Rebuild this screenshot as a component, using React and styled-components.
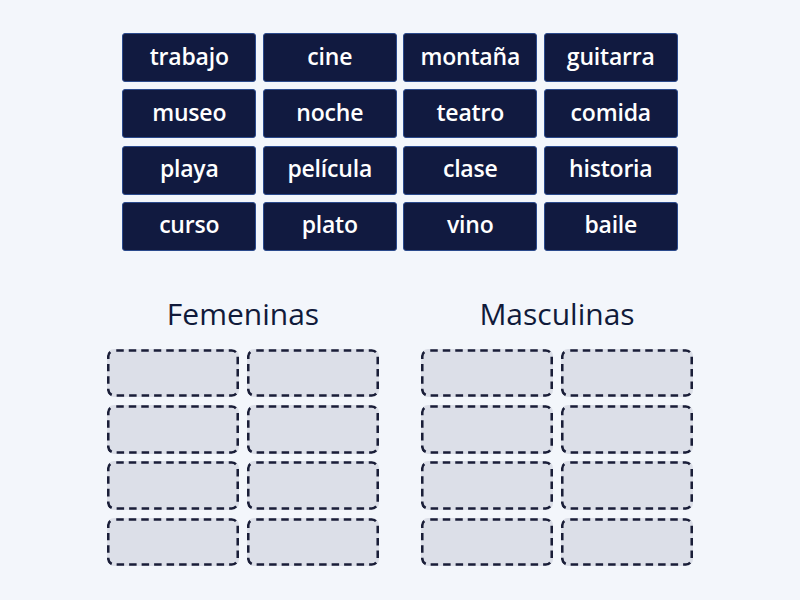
import React from "react";
import styled, { createGlobalStyle } from "styled-components";

const Global = createGlobalStyle`
  html, body { margin: 0; padding: 0; background: #f3f6fb; }
  body { font-family: "Open Sans", "Noto Sans", sans-serif; }
`;

// Rounded dashed outline for the empty drop slots
const dashedOutline = encodeURIComponent(
  `<svg xmlns="http://www.w3.org/2000/svg" width="132" height="48" viewBox="0 0 132 48"><rect x="1.25" y="1.25" width="129.5" height="45.5" rx="6" ry="6" fill="none" stroke="#1a1e38" stroke-width="2.6" stroke-dasharray="7.5 5" stroke-dashoffset="-2"/></svg>`
);

const Page = styled.div`
  width: 800px;
  height: 600px;
  box-sizing: border-box;
  padding-top: 33px;
  display: flex;
  flex-direction: column;
  align-items: center;
`;

const WordGrid = styled.div`
  display: grid;
  grid-template-columns: repeat(4, 134px);
  grid-auto-rows: 49px;
  column-gap: 6.5px;
  row-gap: 7.3px;
`;

const Tile = styled.div`
  box-sizing: border-box;
  background: #111a40;
  border: 1px solid #2b4a8c;
  border-radius: 3px;
  color: #ffffff;
  font-size: 23px;
  font-weight: 600;
  letter-spacing: -0.2px;
  display: flex;
  align-items: center;
  justify-content: center;
  padding-bottom: 4px;
`;

const Groups = styled.div`
  margin-top: 44px;
  display: flex;
  gap: 42px;
`;

const Group = styled.div`
  display: flex;
  flex-direction: column;
  align-items: center;
`;

const Heading = styled.h2`
  margin: 0;
  height: 54px;
  font-size: 30px;
  font-weight: 400;
  color: #101a3a;
  line-height: 38px;
`;

const Slots = styled.div`
  display: grid;
  grid-template-columns: repeat(2, 132px);
  grid-auto-rows: 48.5px;
  column-gap: 8px;
  row-gap: 7.8px;
`;

const Slot = styled.div`
  box-sizing: border-box;
  background-color: #dcdfe8;
  background-image: url("data:image/svg+xml,${dashedOutline}");
  background-repeat: no-repeat;
  background-size: 100% 100%;
  border-radius: 7px;
`;

const words = [
  "trabajo", "cine", "montaña", "guitarra",
  "museo", "noche", "teatro", "comida",
  "playa", "película", "clase", "historia",
  "curso", "plato", "vino", "baile",
];

const groups = ["Femeninas", "Masculinas"];

export default function App() {
  return (
    <>
      <Global />
      <Page>
        <WordGrid>
          {words.map((w) => (
            <Tile key={w}>{w}</Tile>
          ))}
        </WordGrid>
        <Groups>
          {groups.map((g) => (
            <Group key={g}>
              <Heading>{g}</Heading>
              <Slots>
                {Array.from({ length: 8 }, (_, i) => (
                  <Slot key={i} />
                ))}
              </Slots>
            </Group>
          ))}
        </Groups>
      </Page>
    </>
  );
}
